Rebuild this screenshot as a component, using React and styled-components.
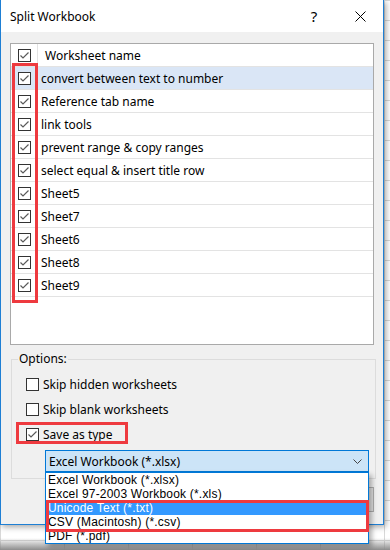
import React from 'react';
import styled, { createGlobalStyle } from 'styled-components';

const sheets = [
  'convert between text to number',
  'Reference tab name',
  'link tools',
  'prevent range & copy ranges',
  'select equal & insert title row',
  'Sheet5',
  'Sheet7',
  'Sheet6',
  'Sheet8',
  'Sheet9',
];

const fileTypes = [
  'Excel Workbook (*.xlsx)',
  'Excel 97-2003 Workbook (*.xls)',
  'Unicode Text (*.txt)',
  'CSV (Macintosh) (*.csv)',
  'PDF (*.pdf)',
];

const GlobalStyle = createGlobalStyle`
  body {
    margin: 0;
    font-family: 'Noto Sans', 'Liberation Sans', sans-serif;
    font-size: 12px;
    color: #000;
  }
`;

const CheckBox = ({ checked }) => (
  <Box>
    {checked && (
      <svg width="11" height="11" viewBox="0 0 11 11">
        <polyline points="1.5,5.5 4,8 9.5,2.5" fill="none" stroke="#5a5a5a" strokeWidth="1.2" />
      </svg>
    )}
  </Box>
);

const App = () => {
  return (
    <Desktop>
      <GlobalStyle />
      <Dialog>
        <TitleBar>
          <Title>Split Workbook</Title>
          <CaptionButton>?</CaptionButton>
          <CaptionButton>
            <svg width="11" height="11" viewBox="0 0 11 11">
              <path d="M0.5 0.5 L10.5 10.5 M10.5 0.5 L0.5 10.5" stroke="#000" strokeWidth="1" />
            </svg>
          </CaptionButton>
        </TitleBar>
        <Body>
          <ListBox>
            <Row header>
              <CheckCell><CheckBox checked /></CheckCell>
              <NameCell header>Worksheet name</NameCell>
            </Row>
            {sheets.map((name, i) => (
              <Row key={name} selected={i === 0}>
                <CheckCell><CheckBox checked /></CheckCell>
                <NameCell>{name}</NameCell>
              </Row>
            ))}
            <Mark style={{ left: 1, top: 19, width: 26, height: 240 }} />
          </ListBox>

          <Options>
            <Legend>Options:</Legend>
            <OptionRow>
              <CheckBox />
              <span>Skip hidden worksheets</span>
            </OptionRow>
            <OptionRow>
              <CheckBox />
              <span>Skip blank worksheets</span>
            </OptionRow>
            <OptionRow>
              <CheckBox checked />
              <span>Save as type</span>
              <Mark style={{ left: 4, top: 0, width: 112, height: 22 }} />
            </OptionRow>
            <Combo>
              <span>Excel Workbook (*.xlsx)</span>
              <svg width="9" height="5" viewBox="0 0 9 5">
                <polyline points="0.5,0.5 4.5,4.5 8.5,0.5" fill="none" stroke="#444" strokeWidth="1" />
              </svg>
              <DropList>
                {fileTypes.map((t, i) => (
                  <DropItem key={t} active={i === 2}>{t}</DropItem>
                ))}
                <Mark style={{ left: 0, top: 27, width: 323, height: 32 }} />
              </DropList>
            </Combo>
          </Options>

          <Footer>
            <Button>Ok</Button>
            <Button>Cancel</Button>
          </Footer>
        </Body>
      </Dialog>
    </Desktop>
  );
};

export default App;

const Desktop = styled.div`
  width: 390px;
  height: 550px;
  overflow: hidden;
  background-color: #fff;
  background-image:
    linear-gradient(to bottom, transparent 538px, #8c8c8c 550px),
    linear-gradient(#d8d8d8 1px, transparent 1px),
    linear-gradient(90deg, #d8d8d8 1px, transparent 1px);
  background-size: 100% 100%, 64px 20px, 64px 20px;
`;

const Dialog = styled.div`
  width: 384px;
  height: 525px;
  box-sizing: border-box;
  border: 1px solid #1e7fd4;
  border-top: none;
  background: #f0f0f0;
  display: flex;
  flex-direction: column;
  box-shadow: 2px 2px 6px rgba(0, 0, 0, 0.35);
`;

const TitleBar = styled.div`
  height: 32px;
  flex-shrink: 0;
  background: #fff;
  display: flex;
  align-items: center;
  padding-left: 9px;
`;

const Title = styled.div`
  flex: 1;
`;

const CaptionButton = styled.div`
  width: 46px;
  height: 32px;
  display: flex;
  align-items: center;
  justify-content: center;
  font-size: 15px;
`;

const Body = styled.div`
  display: flex;
  flex-direction: column;
  padding: 11px 9px 0 9px;
`;

const ListBox = styled.div`
  position: relative;
  height: 302px;
  box-sizing: border-box;
  border: 1px solid #a9a9a9;
  background: #fff;
`;

const Row = styled.div`
  display: grid;
  grid-template-columns: 27px 1fr;
  height: 23px;
  box-sizing: border-box;
  border-bottom: 1px solid #e3e3e3;
  background: ${p => (p.selected ? '#dae6f6' : '#fff')};
`;

const CheckCell = styled.div`
  display: flex;
  align-items: center;
  justify-content: center;
  border-right: 1px solid #e3e3e3;
`;

const NameCell = styled.div`
  display: flex;
  align-items: center;
  padding-left: ${p => (p.header ? '7px' : '3px')};
  white-space: nowrap;
`;

const Box = styled.div`
  width: 13px;
  height: 13px;
  box-sizing: border-box;
  border: 1px solid #333;
  background: #fff;
  display: flex;
  align-items: center;
  justify-content: center;
  flex-shrink: 0;
`;

const Mark = styled.div`
  position: absolute;
  box-sizing: border-box;
  border: 3px solid #ee3a3f;
  pointer-events: none;
`;

const Options = styled.fieldset`
  margin: 6px 0 0 1px;
  width: 365px;
  box-sizing: border-box;
  padding: 5px 0 6px 0;
  border: 1px solid #dcdcdc;
  min-width: 0;
`;

const Legend = styled.legend`
  margin-left: 6px;
  padding: 0 1px;
  line-height: 16px;
`;

const OptionRow = styled.div`
  position: relative;
  display: flex;
  align-items: center;
  gap: 4px;
  height: 25px;
  padding-left: 14px;
`;

const Combo = styled.div`
  position: relative;
  margin: 3px 0 0 33px;
  width: 324px;
  height: 22px;
  box-sizing: border-box;
  border: 1px solid #0078d7;
  background: #cce4f7;
  display: flex;
  align-items: center;
  justify-content: space-between;
  padding: 0 6px 0 3px;
  z-index: 2;
`;

const DropList = styled.div`
  position: absolute;
  top: calc(100% + 1px);
  left: -1px;
  width: 324px;
  box-sizing: border-box;
  border: 1px solid #0078d7;
  background: #fff;
  box-shadow: 3px 3px 5px rgba(0, 0, 0, 0.3);
`;

const DropItem = styled.div`
  height: 14px;
  line-height: 14px;
  padding-left: 2px;
  font-family: 'Liberation Sans', Arial, sans-serif;
  font-size: 12px;
  letter-spacing: 0.2px;
  background: ${p => (p.active ? '#3399ff' : 'transparent')};
  color: ${p => (p.active ? '#fff' : '#000')};
`;

const Footer = styled.div`
  display: flex;
  justify-content: flex-end;
  gap: 8px;
  margin-top: 8px;
`;

const Button = styled.button`
  width: 75px;
  height: 25px;
  border: 1px solid #adadad;
  background: #e1e1e1;
  font-family: inherit;
  font-size: 12px;
`;
